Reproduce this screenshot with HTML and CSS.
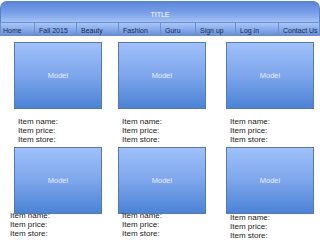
FILE: index.html
```html
<!DOCTYPE html>
<html lang="en">
<head>
    <meta charset="UTF-8">
    <title>Store mockup</title>
    <link rel="stylesheet" href="styles.css">
</head>
<body>

<div class="header">
    <div class="title-bar">TITLE</div>
    <nav class="nav">
        <a class="nav-item">Home</a>
        <a class="nav-item">Fall 2015</a>
        <a class="nav-item">Beauty</a>
        <a class="nav-item">Fashion</a>
        <a class="nav-item">Guru</a>
        <a class="nav-item">Sign up</a>
        <a class="nav-item">Log in</a>
        <a class="nav-item">Contact Us</a>
    </nav>
</div>

<div class="grid">
    <div class="card">
        <div class="model">Model</div>
        <div class="info"><p>Item name:</p><p>Item price:</p><p>Item store:</p></div>
    </div>
    <div class="card">
        <div class="model">Model</div>
        <div class="info"><p>Item name:</p><p>Item price:</p><p>Item store:</p></div>
    </div>
    <div class="card">
        <div class="model">Model</div>
        <div class="info"><p>Item name:</p><p>Item price:</p><p>Item store:</p></div>
    </div>

    <div class="card card-low">
        <div class="model">Model</div>
        <div class="info info-out"><p>Item name:</p><p>Item price:</p><p>Item store:</p></div>
    </div>
    <div class="card card-low">
        <div class="model">Model</div>
        <div class="info"><p>Item name:</p><p>Item price:</p><p>Item store:</p></div>
    </div>
    <div class="card card-low">
        <div class="model">Model</div>
        <div class="info info-drop"><p>Item name:</p><p>Item price:</p><p>Item store:</p></div>
    </div>
</div>

</body>
</html>
```

FILE: styles.css
```css
body {
    margin: 0;
    background-color: #ffffff;
    font-family: "Liberation Sans", Arial, sans-serif;
    color: #1a1a1a;
}

/* Header: title strip + tab row */
.header {
    padding-top: 1px;
}
.title-bar {
    height: 21px;
    box-sizing: border-box;
    border: 1px solid #5a82c8;
    border-bottom: none;
    border-radius: 7px 7px 0 0;
    background: linear-gradient(#5a86da, #7aa0e8 55%, #a4c1f4);
    color: #ffffff;
    font-size: 7px;
    text-align: center;
    line-height: 21px;
    padding-top: 2px;
}
.nav {
    display: grid;
    grid-template-columns: 35px 42px 42px 42px 35px 40px 43px 41px;
    height: 14px;
}
.nav-item {
    box-sizing: border-box;
    border: 1px solid #6a8fcf;
    border-left: none;
    background: linear-gradient(#a9c6f6, #86aaea 55%, #6890db);
    color: #1d2b4a;
    font-size: 7px;
    line-height: 13px;
    padding: 1px 0 0 4px;
    white-space: nowrap;
    overflow: hidden;
}
.nav-item:first-child {
    padding-left: 2px;
    border-left: 1px solid #6a8fcf;
}

/* Product grid */
.grid {
    display: grid;
    grid-template-columns: 104px 108px 88px;
    padding: 6px 0 0 14px;
}
.card-low {
    margin-top: 3px;
}
.model {
    width: 88px;
    height: 67px;
    box-sizing: border-box;
    border: 1px solid #5679b4;
    background: linear-gradient(#9fc0fa, #7ea6ec 50%, #4a83d6);
    color: #e6efff;
    font-size: 7.5px;
    display: flex;
    align-items: center;
    justify-content: center;
}
.info {
    padding: 8px 0 0 4px;
    font-size: 8px;
    line-height: 9px;
}
.info p {
    margin: 0;
}
.card-low .info {
    margin-top: -3px;
    padding-top: 0;
}
.card-low .info-out {
    padding-left: 0;
    margin-left: -4px;
}
.card-low .info-drop {
    padding-top: 2px;
}
```
